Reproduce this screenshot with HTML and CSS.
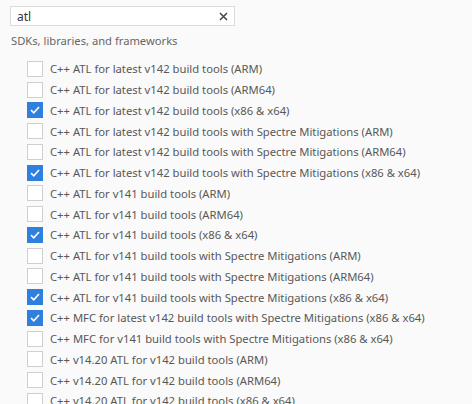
FILE: index.html
```html
<!DOCTYPE html>
<html>
<head>
<meta charset="utf-8">
<link rel="stylesheet" href="styles.css">
</head>
<body>
<div class="panel">
  <div class="search">
    <span class="search-text">atl</span>
    <svg class="clear" width="9" height="9" viewBox="0 0 9 9"><path d="M1 1L8 8M8 1L1 8" stroke="#444" stroke-width="1.5"/></svg>
  </div>
  <div class="heading">SDKs, libraries, and frameworks</div>
  <ul class="list">
    <li class="row"><span class="box"></span><span class="label">C++ ATL for latest v142 build tools (ARM)</span></li>
    <li class="row"><span class="box"></span><span class="label">C++ ATL for latest v142 build tools (ARM64)</span></li>
    <li class="row"><span class="box checked"><svg viewBox="0 0 16 16"><path d="M3.5 8.2L6.6 11.2L12.6 4.6" fill="none" stroke="#fff" stroke-width="1.8"/></svg></span><span class="label">C++ ATL for latest v142 build tools (x86 &amp; x64)</span></li>
    <li class="row"><span class="box"></span><span class="label">C++ ATL for latest v142 build tools with Spectre Mitigations (ARM)</span></li>
    <li class="row"><span class="box"></span><span class="label">C++ ATL for latest v142 build tools with Spectre Mitigations (ARM64)</span></li>
    <li class="row"><span class="box checked"><svg viewBox="0 0 16 16"><path d="M3.5 8.2L6.6 11.2L12.6 4.6" fill="none" stroke="#fff" stroke-width="1.8"/></svg></span><span class="label">C++ ATL for latest v142 build tools with Spectre Mitigations (x86 &amp; x64)</span></li>
    <li class="row"><span class="box"></span><span class="label">C++ ATL for v141 build tools (ARM)</span></li>
    <li class="row"><span class="box"></span><span class="label">C++ ATL for v141 build tools (ARM64)</span></li>
    <li class="row"><span class="box checked"><svg viewBox="0 0 16 16"><path d="M3.5 8.2L6.6 11.2L12.6 4.6" fill="none" stroke="#fff" stroke-width="1.8"/></svg></span><span class="label">C++ ATL for v141 build tools (x86 &amp; x64)</span></li>
    <li class="row"><span class="box"></span><span class="label">C++ ATL for v141 build tools with Spectre Mitigations (ARM)</span></li>
    <li class="row"><span class="box"></span><span class="label">C++ ATL for v141 build tools with Spectre Mitigations (ARM64)</span></li>
    <li class="row"><span class="box checked"><svg viewBox="0 0 16 16"><path d="M3.5 8.2L6.6 11.2L12.6 4.6" fill="none" stroke="#fff" stroke-width="1.8"/></svg></span><span class="label">C++ ATL for v141 build tools with Spectre Mitigations (x86 &amp; x64)</span></li>
    <li class="row"><span class="box checked"><svg viewBox="0 0 16 16"><path d="M3.5 8.2L6.6 11.2L12.6 4.6" fill="none" stroke="#fff" stroke-width="1.8"/></svg></span><span class="label">C++ MFC for latest v142 build tools with Spectre Mitigations (x86 &amp; x64)</span></li>
    <li class="row"><span class="box"></span><span class="label">C++ MFC for v141 build tools with Spectre Mitigations (x86 &amp; x64)</span></li>
    <li class="row"><span class="box"></span><span class="label">C++ v14.20 ATL for v142 build tools (ARM)</span></li>
    <li class="row"><span class="box"></span><span class="label">C++ v14.20 ATL for v142 build tools (ARM64)</span></li>
    <li class="row"><span class="box"></span><span class="label">C++ v14.20 ATL for v142 build tools (x86 &amp; x64)</span></li>
  </ul>
</div>
</body>
</html>
```
FILE: styles.css
```css
html, body {
  margin: 0;
  padding: 0;
  background: #fafafa;
  height: 404px;
  overflow: hidden;
}
.panel {
  padding: 6px 0 0 10px;
  font-family: "Noto Sans", "Open Sans", sans-serif;
  color: #555;
}
.search {
  box-sizing: border-box;
  width: 225px;
  height: 20px;
  background: #fff;
  border: 1px solid #dcdcdc;
  display: flex;
  align-items: center;
  justify-content: space-between;
  padding: 0 6px 0 6px;
}
.search-text {
  font-size: 12px;
  color: #333;
}
.clear {
  display: block;
}
.heading {
  font-size: 11.2px;
  color: #666;
  margin: 7px 0 0 1px;
  line-height: 16px;
}
.list {
  list-style: none;
  margin: 9.5px 0 0 17px;
  padding: 0;
}
.row {
  display: flex;
  align-items: center;
  height: 20.75px;
}
.box {
  box-sizing: border-box;
  width: 16px;
  height: 16px;
  border: 1px solid #cfcfcf;
  background: #fff;
  margin-right: 7px;
  flex: none;
}
.box.checked {
  background: #2f7fdc;
  border-color: #2f7fdc;
}
.box svg {
  display: block;
  width: 14px;
  height: 14px;
}
.label {
  font-size: 11.25px;
  color: #585858;
  white-space: nowrap;
}
```
